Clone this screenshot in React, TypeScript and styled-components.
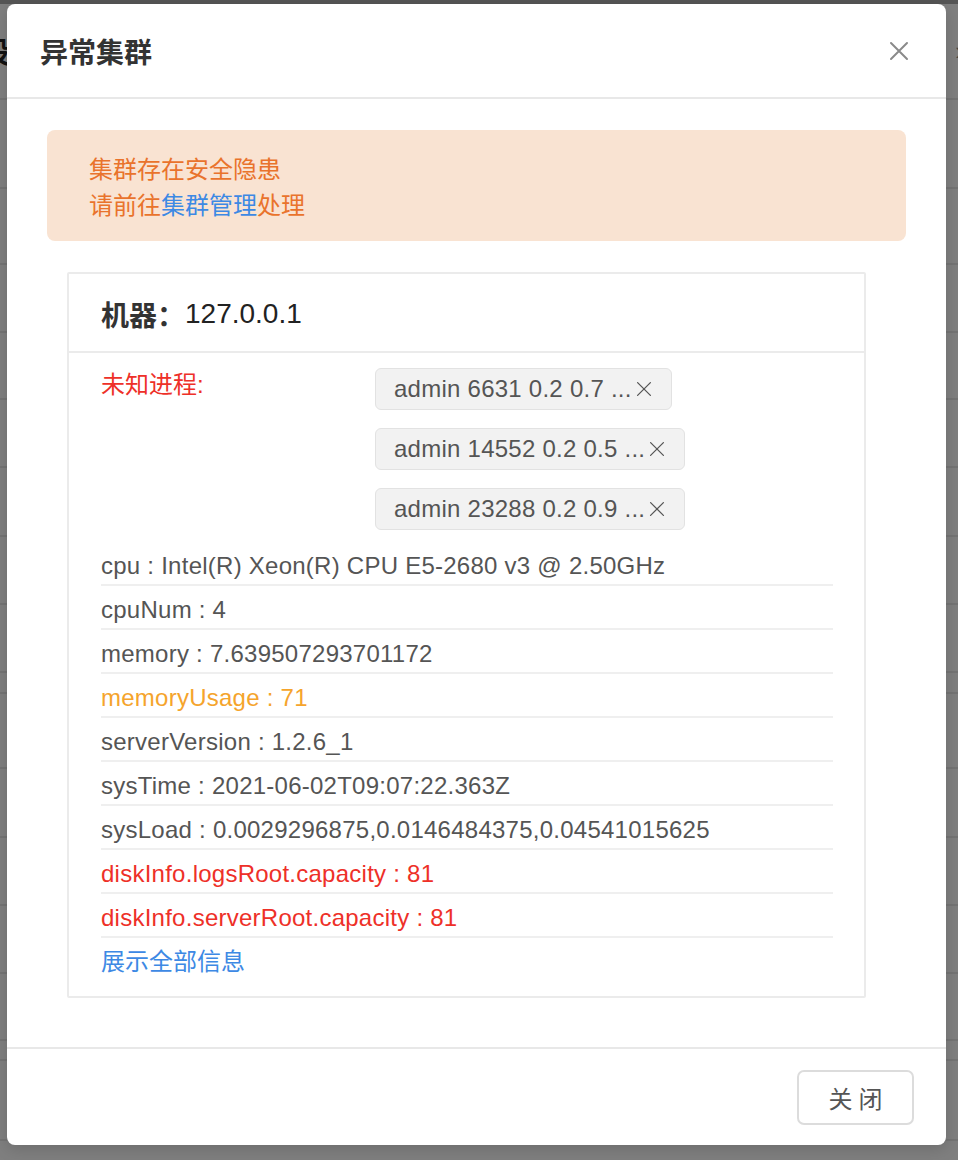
import React from "react";
import styled, { createGlobalStyle } from "styled-components";

const GlobalStyle = createGlobalStyle`
  html, body {
    margin: 0;
    padding: 0;
  }
  body {
    font-family: "Liberation Sans", "Noto Sans CJK SC", sans-serif;
    color: #555;
  }
  * {
    box-sizing: border-box;
  }
`;

const Stage = styled.div`
  position: relative;
  width: 958px;
  height: 1160px;
  overflow: hidden;
  background: #fff;
`;

// page behind the modal
const TopStrip = styled.div`
  height: 4px;
  background: #aaa;
`;

const PageHeader = styled.div`
  height: 96px;
  display: flex;
  align-items: center;
  justify-content: space-between;
  border-bottom: 2px solid #e8e8e8;
`;

const PageTitle = styled.span`
  margin-left: -18px;
  font-size: 28px;
  font-weight: 700;
  color: #222;
`;

const PageChevron = styled.span`
  margin-right: -6px;
  font-size: 26px;
  color: #888;
`;

const PageRow = styled.div<{ $h: number }>`
  height: ${(p) => p.$h}px;
  border-bottom: 2px solid #e8e8e8;
`;

const Overlay = styled.div`
  position: absolute;
  inset: 0;
  background: rgba(0, 0, 0, 0.5);
`;

// modal
const Modal = styled.div`
  position: absolute;
  left: 7px;
  top: 4px;
  width: 939px;
  height: 1141px;
  background: #fff;
  border-radius: 8px;
  box-shadow: 0 4px 16px rgba(0, 0, 0, 0.15);
  display: flex;
  flex-direction: column;
  overflow: hidden;
`;

const ModalHeader = styled.div`
  height: 95px;
  flex-shrink: 0;
  display: flex;
  align-items: center;
  justify-content: space-between;
  padding: 0 37px 0 33px;
  border-bottom: 2px solid #e8e8e8;
`;

const ModalTitle = styled.h2`
  margin: 0;
  font-size: 28px;
  font-weight: 700;
  color: #333;
`;

const CloseButton = styled.button`
  width: 20px;
  height: 20px;
  padding: 0;
  border: none;
  background: none;
  cursor: pointer;
  display: flex;
`;

const ModalBody = styled.div`
  flex: 1;
  padding: 31px 40px 0;
  display: flex;
  flex-direction: column;
`;

const Alert = styled.div`
  height: 111px;
  padding: 22px 42px 0;
  background: #f9e3d2;
  border-radius: 8px;
  font-size: 24px;
  line-height: 36px;
  color: #e9732c;
`;

const Link = styled.a`
  color: #3d89e4;
  text-decoration: none;
  cursor: pointer;
`;

const Card = styled.div`
  margin: 31px 0 0 20px;
  width: 799px;
  border: 2px solid #ebebeb;
  border-radius: 2px;
`;

const CardHeader = styled.div`
  height: 79px;
  display: flex;
  align-items: center;
  padding: 2px 32px 0;
  border-bottom: 2px solid #ebebeb;
  font-size: 28px;
  font-weight: 700;
  color: #333;
`;

const CardHeaderValue = styled.span`
  font-weight: 400;
  color: #222;
`;

const CardBody = styled.div`
  padding: 14px 31px 16px 32px;
`;

const ProcessRow = styled.div`
  display: grid;
  grid-template-columns: 274px 1fr;
  margin-bottom: 12px;
`;

const ProcessLabel = styled.span`
  font-size: 24px;
  line-height: 36px;
  color: #ee3028;
`;

const TagList = styled.div`
  display: flex;
  flex-direction: column;
  align-items: flex-start;
  gap: 18px;
  padding-top: 1px;
`;

const Tag = styled.span`
  height: 42px;
  display: inline-flex;
  align-items: center;
  gap: 4px;
  padding: 0 19px 0 18px;
  background: #f2f2f2;
  border: 1px solid #e2e2e2;
  border-radius: 6px;
  font-size: 24px;
  letter-spacing: 0.25px;
  color: #555;
`;

const TagClose = styled.span`
  display: flex;
  cursor: pointer;
`;

type Tone = "normal" | "warn" | "danger";

const toneColor: Record<Tone, string> = {
  normal: "#555",
  warn: "#f5a42c",
  danger: "#ee3028",
};

const InfoRow = styled.div<{ $tone: Tone }>`
  padding-top: 6px;
  font-size: 24px;
  line-height: 36px;
  letter-spacing: 0.25px;
  color: ${(p) => toneColor[p.$tone]};
  border-bottom: 2px solid #efefef;
`;

const MoreRow = styled.div`
  padding-top: 6px;
  font-size: 24px;
  line-height: 36px;
`;

const ModalFooter = styled.div`
  flex-shrink: 0;
  display: flex;
  justify-content: flex-end;
  padding: 21px 32px 20px;
  border-top: 2px solid #e8e8e8;
`;

const FooterButton = styled.button`
  width: 117px;
  height: 55px;
  border: 2px solid #dcdcdc;
  border-radius: 7px;
  background: #fff;
  font-family: inherit;
  font-size: 24px;
  color: #555;
  letter-spacing: 6px;
  padding: 0 0 0 6px;
  cursor: pointer;
`;

const CrossIcon = ({ size, color, width }: { size: number; color: string; width: number }) => (
  <svg width={size} height={size} viewBox="0 0 20 20" fill="none">
    <path d="M2 2 L18 18 M18 2 L2 18" stroke={color} strokeWidth={width} strokeLinecap="round" />
  </svg>
);

const pageRows = [89, 76, 68, 67, 68, 69, 68, 68, 21, 75, 69, 68, 68, 67, 20, 80];

const processes = ["admin 6631 0.2 0.7 ...", "admin 14552 0.2 0.5 ...", "admin 23288 0.2 0.9 ..."];

const infos: { text: string; tone: Tone }[] = [
  { text: "cpu : Intel(R) Xeon(R) CPU E5-2680 v3 @ 2.50GHz", tone: "normal" },
  { text: "cpuNum : 4", tone: "normal" },
  { text: "memory : 7.639507293701172", tone: "normal" },
  { text: "memoryUsage : 71", tone: "warn" },
  { text: "serverVersion : 1.2.6_1", tone: "normal" },
  { text: "sysTime : 2021-06-02T09:07:22.363Z", tone: "normal" },
  { text: "sysLoad : 0.0029296875,0.0146484375,0.04541015625", tone: "normal" },
  { text: "diskInfo.logsRoot.capacity : 81", tone: "danger" },
  { text: "diskInfo.serverRoot.capacity : 81", tone: "danger" },
];

const App = () => {
  return (
    <Stage>
      <GlobalStyle />
      <TopStrip />
      <PageHeader>
        <PageTitle>设置</PageTitle>
        <PageChevron>›</PageChevron>
      </PageHeader>
      {pageRows.map((h, i) => (
        <PageRow key={i} $h={h} />
      ))}
      <Overlay />
      <Modal>
        <ModalHeader>
          <ModalTitle>异常集群</ModalTitle>
          <CloseButton aria-label="close">
            <CrossIcon size={20} color="#8a8a8a" width={2} />
          </CloseButton>
        </ModalHeader>
        <ModalBody>
          <Alert>
            <div>集群存在安全隐患</div>
            <div>
              请前往<Link>集群管理</Link>处理
            </div>
          </Alert>
          <Card>
            <CardHeader>
              机器：<CardHeaderValue>127.0.0.1</CardHeaderValue>
            </CardHeader>
            <CardBody>
              <ProcessRow>
                <ProcessLabel>未知进程:</ProcessLabel>
                <TagList>
                  {processes.map((p) => (
                    <Tag key={p}>
                      {p}
                      <TagClose>
                        <CrossIcon size={16} color="#555" width={1.6} />
                      </TagClose>
                    </Tag>
                  ))}
                </TagList>
              </ProcessRow>
              {infos.map((info) => (
                <InfoRow key={info.text} $tone={info.tone}>
                  {info.text}
                </InfoRow>
              ))}
              <MoreRow>
                <Link>展示全部信息</Link>
              </MoreRow>
            </CardBody>
          </Card>
        </ModalBody>
        <ModalFooter>
          <FooterButton>关闭</FooterButton>
        </ModalFooter>
      </Modal>
    </Stage>
  );
};

export default App;
